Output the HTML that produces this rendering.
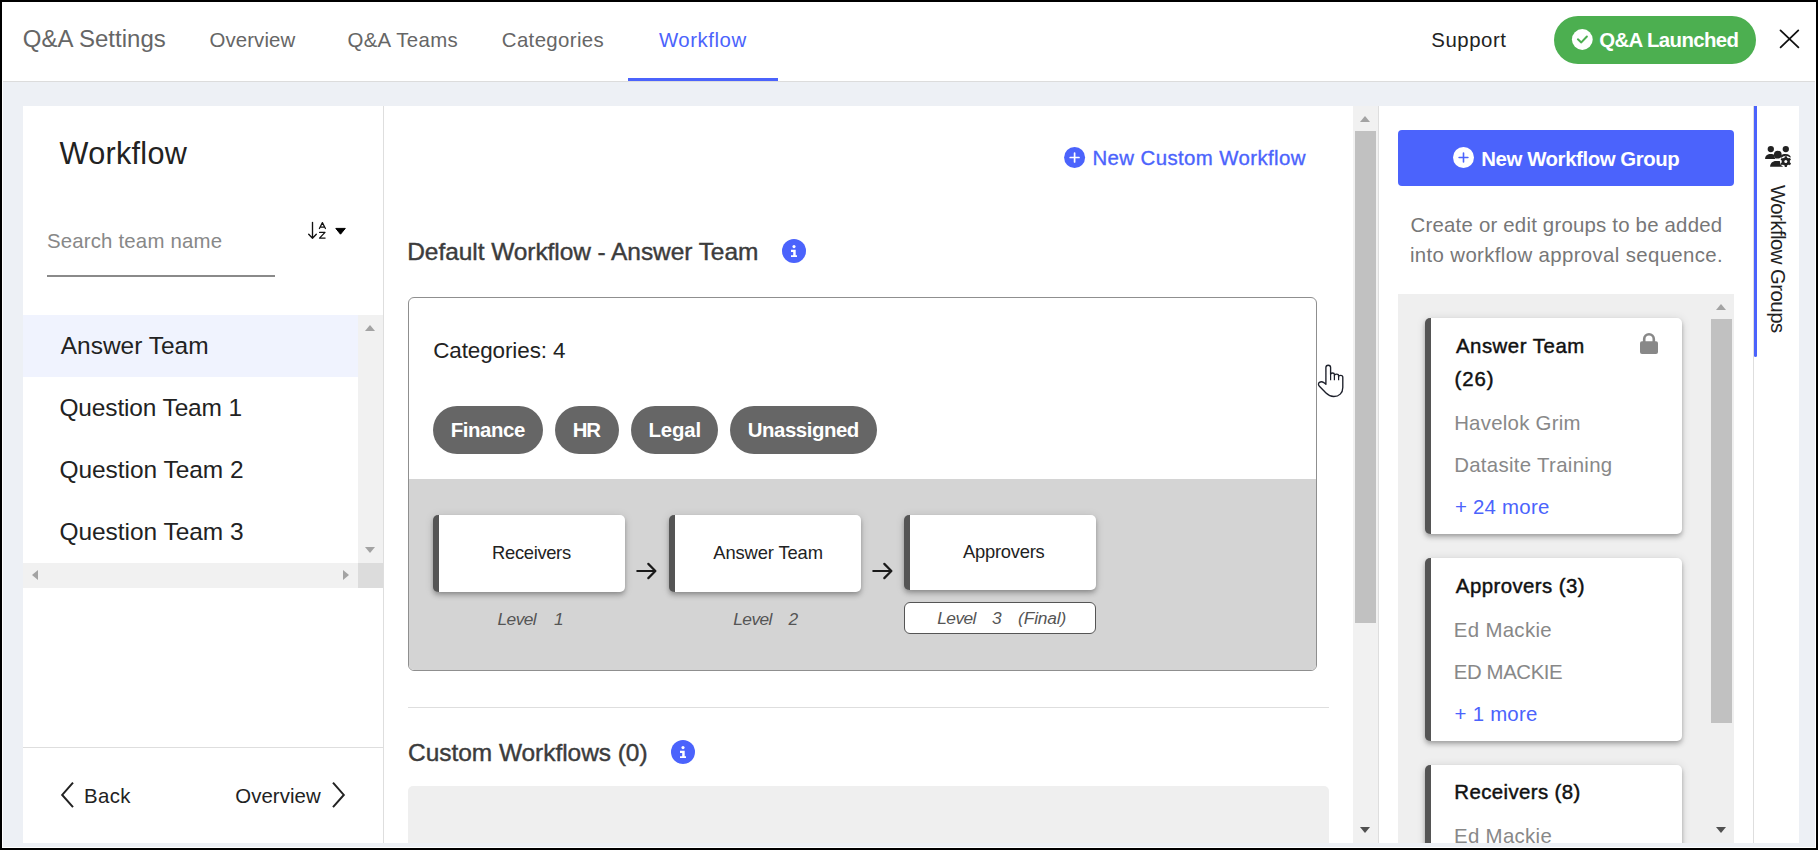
<!DOCTYPE html>
<html>
<head>
<meta charset="utf-8">
<title>Q&amp;A Settings - Workflow</title>
<style>
html,body{margin:0;padding:0;overflow:hidden;}
body{width:1818px;height:850px;background:#000;position:relative;overflow:hidden;font-family:"Liberation Sans",sans-serif;}
.a{position:absolute;box-sizing:border-box;}
.t{position:absolute;white-space:pre;font-family:"Liberation Sans",sans-serif;}
.tri{position:absolute;width:0;height:0;}
</style>
</head>
<body>
<!-- frame -->
<div class="a" style="left:2px;top:2px;width:1814px;height:846px;background:#fff;"></div>
<div class="a" style="left:3px;top:82px;width:1812px;height:765px;background:#edf0f5;"></div>
<!-- header line -->
<div class="a" style="left:3px;top:81px;width:1812px;height:1px;background:#dcdcdc;"></div>
<!-- nav underline -->
<div class="a" style="left:628px;top:78px;width:150px;height:3px;background:#4b63fc;"></div>
<!-- launched button -->
<div class="a" style="left:1554px;top:16px;width:202px;height:48px;border-radius:24px;background:#4caf50;"></div>
<svg class="a" style="left:1571px;top:29px;" width="22" height="22" viewBox="0 0 22 22">
  <circle cx="11.3" cy="10.5" r="10.4" fill="#fff"/>
  <path d="M6.9 10.3 L10.3 13.4 L15.9 7.5" fill="none" stroke="#4caf50" stroke-width="2" stroke-linecap="round" stroke-linejoin="round"/>
</svg>
<!-- close X -->
<svg class="a" style="left:1778px;top:28px;" width="24" height="22" viewBox="0 0 24 22">
  <path d="M2.5 2.4 L20.4 19.4 M20.3 2.4 L2.6 19.4" stroke="#111" stroke-width="1.8" stroke-linecap="round" fill="none"/>
</svg>

<!-- LEFT PANEL -->
<div class="a" style="left:23px;top:106px;width:361px;height:737px;background:#fff;border-right:1px solid #dedede;"></div>
<!-- search underline -->
<div class="a" style="left:47px;top:275px;width:228px;height:2px;background:#8a8a8a;"></div>
<!-- sort icon -->
<svg class="a" style="left:300px;top:215px;" width="55" height="30" viewBox="300 215 55 30">
  <path d="M312.5 222.3 V238.3 M308.7 234.2 L312.5 238.2 L316.3 234.2" fill="none" stroke="#111" stroke-width="1.35" stroke-linecap="round" stroke-linejoin="round"/>
  <path d="M319.4 228.5 L322.4 222.6 L325.4 228.5 M320.4 227.1 H324.6" fill="none" stroke="#111" stroke-width="1.25" stroke-linecap="round" stroke-linejoin="round"/>
  <path d="M319.6 232.4 H325 L319.5 238.1 H325.1" fill="none" stroke="#111" stroke-width="1.25" stroke-linecap="round" stroke-linejoin="round"/>
  <path d="M335.8 228.4 H345.3 L340.5 234.2 Z" fill="#000" stroke="#000" stroke-width="1" stroke-linejoin="round"/>
</svg>
<!-- highlighted row -->
<div class="a" style="left:23px;top:315px;width:335px;height:62px;background:#f0f3fe;"></div>
<!-- v scrollbar -->
<div class="a" style="left:358px;top:315px;width:25px;height:248px;background:#f1f1f1;"></div>
<div class="tri" style="left:364.9px;top:324.8px;border-left:5.65px solid transparent;border-right:5.65px solid transparent;border-bottom:6.2px solid #a3a3a3;"></div>
<div class="tri" style="left:364.9px;top:546.9px;border-left:5.65px solid transparent;border-right:5.65px solid transparent;border-top:6.1px solid #a3a3a3;"></div>
<!-- h scrollbar -->
<div class="a" style="left:23px;top:563px;width:335px;height:25px;background:#f1f1f1;"></div>
<div class="a" style="left:358px;top:563px;width:25px;height:25px;background:#dcdcdc;"></div>
<div class="tri" style="left:31.8px;top:569.8px;border-top:5.65px solid transparent;border-bottom:5.65px solid transparent;border-right:6.3px solid #a3a3a3;"></div>
<div class="tri" style="left:343px;top:569.8px;border-top:5.6px solid transparent;border-bottom:5.6px solid transparent;border-left:6.2px solid #a3a3a3;"></div>
<!-- divider -->
<div class="a" style="left:23px;top:747px;width:360px;height:1px;background:#dedede;"></div>
<!-- chevrons -->
<svg class="a" style="left:58px;top:780px;" width="20" height="30" viewBox="0 0 20 30">
  <path d="M15 2.6 L4.2 14.9 L15 27.2" fill="none" stroke="#222" stroke-width="2"/>
</svg>
<svg class="a" style="left:328px;top:780px;" width="20" height="30" viewBox="0 0 20 30">
  <path d="M5 2.6 L15.8 14.9 L5 27.2" fill="none" stroke="#222" stroke-width="2"/>
</svg>

<!-- MIDDLE PANEL -->
<div class="a" style="left:384px;top:106px;width:995px;height:737px;background:#fff;border-right:1px solid #dedede;"></div>
<!-- new custom workflow icon -->
<svg class="a" style="left:1064px;top:147px;" width="22" height="22" viewBox="0 0 22 22">
  <circle cx="10.6" cy="10.5" r="10.5" fill="#4b63fc"/>
  <path d="M10.6 6.1 V14.9 M6.2 10.5 H15 " stroke="#fff" stroke-width="1.7" stroke-linecap="round"/>
</svg>
<!-- info icons -->
<svg class="a" style="left:782px;top:239px;" width="24" height="24" viewBox="0 0 24 24">
  <circle cx="12" cy="12" r="12" fill="#4b63fc"/>
  <path d="M9 10.7 H13.7 V16.2 H15 V17.9 H9 V16.2 H11.2 V12.9 H9 Z" fill="#fff"/>
  <circle cx="12" cy="7.6" r="1.55" fill="#fff"/>
</svg>
<svg class="a" style="left:671px;top:740px;" width="24" height="24" viewBox="0 0 24 24">
  <circle cx="12" cy="12" r="12" fill="#4b63fc"/>
  <path d="M9 10.7 H13.7 V16.2 H15 V17.9 H9 V16.2 H11.2 V12.9 H9 Z" fill="#fff"/>
  <circle cx="12" cy="7.6" r="1.55" fill="#fff"/>
</svg>
<!-- default workflow card -->
<div class="a" style="left:408px;top:297px;width:909px;height:374px;border:1px solid #8f8f8f;border-radius:6px;background:#fff;overflow:hidden;">
  <div class="a" style="left:0;top:181px;width:907px;height:191px;background:#d4d4d4;"></div>
</div>
<!-- chips -->
<div class="a" style="left:433px;top:406px;width:110px;height:48px;border-radius:24px;background:#666;"></div>
<div class="a" style="left:555px;top:406px;width:64px;height:48px;border-radius:24px;background:#666;"></div>
<div class="a" style="left:631px;top:406px;width:87px;height:48px;border-radius:24px;background:#666;"></div>
<div class="a" style="left:730px;top:406px;width:147px;height:48px;border-radius:24px;background:#666;"></div>
<!-- boxes -->
<div class="a" style="left:433px;top:515px;width:192px;height:77px;border-radius:5px;background:#fff;border-left:6px solid #555;box-shadow:0 2px 4px -1px rgba(0,0,0,0.2),0 4px 5px 0 rgba(0,0,0,0.14),0 1px 10px 0 rgba(0,0,0,0.12);"></div>
<div class="a" style="left:669px;top:515px;width:192px;height:77px;border-radius:5px;background:#fff;border-left:6px solid #555;box-shadow:0 2px 4px -1px rgba(0,0,0,0.2),0 4px 5px 0 rgba(0,0,0,0.14),0 1px 10px 0 rgba(0,0,0,0.12);"></div>
<div class="a" style="left:904px;top:515px;width:192px;height:75px;border-radius:5px;background:#fff;border-left:6px solid #555;box-shadow:0 2px 4px -1px rgba(0,0,0,0.2),0 4px 5px 0 rgba(0,0,0,0.14),0 1px 10px 0 rgba(0,0,0,0.12);"></div>
<!-- arrows -->
<svg class="a" style="left:635px;top:560px;" width="24" height="22" viewBox="0 0 24 22">
  <path d="M2.3 11 H20.3 M13.3 3.9 L20.4 11 L13.3 18.1" fill="none" stroke="#1a1a1a" stroke-width="2.2" stroke-linecap="round" stroke-linejoin="round"/>
</svg>
<svg class="a" style="left:871px;top:560px;" width="24" height="22" viewBox="0 0 24 22">
  <path d="M2.3 11 H20.3 M13.3 3.9 L20.4 11 L13.3 18.1" fill="none" stroke="#1a1a1a" stroke-width="2.2" stroke-linecap="round" stroke-linejoin="round"/>
</svg>
<!-- level 3 box -->
<div class="a" style="left:904px;top:602px;width:192px;height:32px;border:1px solid #555;border-radius:6px;background:#fff;"></div>
<!-- separator -->
<div class="a" style="left:408px;top:707px;width:921px;height:1px;background:#dedede;"></div>
<!-- custom workflows gray box -->
<div class="a" style="left:408px;top:786px;width:921px;height:57px;border-radius:5px 5px 0 0;background:#efefef;"></div>
<!-- middle scrollbar -->
<div class="a" style="left:1353px;top:106px;width:25px;height:737px;background:#f1f1f1;"></div>
<div class="a" style="left:1355px;top:131px;width:21px;height:492px;background:#c1c1c1;"></div>
<div class="tri" style="left:1359.8px;top:115.8px;border-left:5.65px solid transparent;border-right:5.65px solid transparent;border-bottom:6.1px solid #a3a3a3;"></div>
<div class="tri" style="left:1360px;top:827px;border-left:5.75px solid transparent;border-right:5.75px solid transparent;border-top:6px solid #505050;"></div>

<!-- RIGHT PANEL -->
<div class="a" style="left:1379px;top:106px;width:420px;height:737px;background:#fff;"></div>
<div class="a" style="left:1398px;top:130px;width:336px;height:56px;border-radius:4px;background:#4b63fc;"></div>
<svg class="a" style="left:1452px;top:147px;" width="22" height="22" viewBox="0 0 22 22">
  <circle cx="11.5" cy="10.5" r="10.5" fill="#fff"/>
  <path d="M11.5 6.1 V14.9 M7.1 10.5 H15.9" stroke="#4b63fc" stroke-width="1.6" stroke-linecap="round"/>
</svg>
<!-- cards container -->
<div class="a" style="left:1398px;top:294px;width:336px;height:549px;background:#efefef;overflow:hidden;">
  <div class="a" style="left:27px;top:24px;width:257px;height:216px;border-radius:5px;background:#fff;border-left:6px solid #555;box-shadow:0 2px 4px -1px rgba(0,0,0,0.2),0 4px 5px 0 rgba(0,0,0,0.14),0 1px 10px 0 rgba(0,0,0,0.12);"></div>
  <div class="a" style="left:27px;top:264px;width:257px;height:183px;border-radius:5px;background:#fff;border-left:6px solid #555;box-shadow:0 2px 4px -1px rgba(0,0,0,0.2),0 4px 5px 0 rgba(0,0,0,0.14),0 1px 10px 0 rgba(0,0,0,0.12);"></div>
  <div class="a" style="left:27px;top:471px;width:257px;height:120px;border-radius:5px;background:#fff;border-left:6px solid #555;box-shadow:0 2px 4px -1px rgba(0,0,0,0.2),0 4px 5px 0 rgba(0,0,0,0.14),0 1px 10px 0 rgba(0,0,0,0.12);"></div>
  <div class="a" style="left:313px;top:25px;width:21px;height:404px;background:#c1c1c1;"></div>
</div>
<div class="tri" style="left:1716px;top:303.7px;border-left:5.75px solid transparent;border-right:5.75px solid transparent;border-bottom:6.4px solid #a3a3a3;"></div>
<div class="tri" style="left:1716px;top:827px;border-left:5.5px solid transparent;border-right:5.5px solid transparent;border-top:6px solid #505050;"></div>
<!-- lock -->
<svg class="a" style="left:1639px;top:332px;" width="20" height="23" viewBox="0 0 20 23">
  <path d="M5.2 10 V7 A4.8 4.8 0 0 1 14.8 7 V10" fill="none" stroke="#888" stroke-width="2.6"/>
  <rect x="1" y="9.3" width="18" height="12.7" rx="2" fill="#888"/>
</svg>
<!-- tab panel -->
<div class="a" style="left:1753px;top:106px;width:1px;height:737px;background:#dedede;"></div>
<div class="a" style="left:1754px;top:106px;width:3px;height:251px;background:#4b63fc;border-radius:0 0 1.5px 1.5px;"></div>
<svg class="a" style="left:1764px;top:145px;" width="28" height="23" viewBox="0 0 28 23">
  <circle cx="6.8" cy="4.05" r="3.15" fill="#222"/>
  <circle cx="21.8" cy="4.05" r="3.15" fill="#222"/>
  <path d="M1.1 13.9 C1.1 10.9 3.4 9 6.8 9 C8.4 9 9.5 9.3 10.3 9.9 C10.2 11.3 10.6 12.7 11.6 13.9 Z" fill="#222"/>
  <path d="M17.2 10.1 C18 9.4 19.6 9 21.8 9 C24.6 9 26.4 10.4 26.9 12.6 L17 13 Z" fill="#222"/>
  <circle cx="13.8" cy="9.7" r="3.9" fill="#222"/>
  <path d="M6.1 21.8 C6.1 18.4 8.5 16 12 16 H15.6 C17.2 16 18.4 16.5 19.3 17.2 L19.5 21.8 Z" fill="#222"/>
  <g transform="translate(21.8 16.6)">
    <circle r="5.9" fill="#fff"/>
    <circle r="4.1" fill="#222"/>
    <g fill="#222">
      <rect x="-1.15" y="-5.4" width="2.3" height="10.8" rx="0.4"/>
      <rect x="-1.15" y="-5.4" width="2.3" height="10.8" rx="0.4" transform="rotate(60)"/>
      <rect x="-1.15" y="-5.4" width="2.3" height="10.8" rx="0.4" transform="rotate(120)"/>
    </g>
    <circle r="1.5" fill="#fff"/>
  </g>
</svg>
<div class="t" id="vtab" style="left:1767px;top:184.55px;font-size:20.4px;line-height:20.4px;color:#222;transform-origin:0 0;transform:translate(21px,0) rotate(90deg);letter-spacing:-0.564px;">Workflow Groups</div>

<!-- cursor -->
<svg class="a" style="left:1316px;top:363px;" width="30" height="36" viewBox="0 0 30 36">
  <path d="M9.9 21.3 V4.6 C9.9 1.4 14.6 1.4 14.6 4.6 V11.6 C14.6 9.4 18.4 9.4 18.4 11.6 V12.8 C18.4 10.6 22.6 10.6 22.6 12.8 V14 C22.6 11.8 26.8 11.8 26.8 14.2 V24.5 C26.8 30.2 23 33.5 17.8 33.5 C14.2 33.5 12 32 10 30 L3.4 23.2 C2.2 22 2.1 20.3 3.4 19.4 C4.8 18.5 6.4 18.6 7.8 19.6 Z" fill="#fff" stroke="#1c1f2a" stroke-width="1.35" stroke-linejoin="round"/>
  <path d="M14.6 11.6 V17.3 M18.4 12.8 V17.3 M22.6 14 V17.3" stroke="#1c1f2a" stroke-width="1.2"/>
</svg>

<div class='t' id='nav_qa' style='left:22.75px;top:27.00px;font-size:23.970px;line-height:23.970px;font-weight:400;font-style:normal;letter-spacing:0.045px;color:#666;'>Q&amp;A Settings</div>
<div class='t' id='nav_ov' style='left:209.40px;top:30.00px;font-size:20.400px;line-height:20.400px;font-weight:400;font-style:normal;letter-spacing:0.129px;color:#666;'>Overview</div>
<div class='t' id='nav_tm' style='left:347.40px;top:30.00px;font-size:20.400px;line-height:20.400px;font-weight:400;font-style:normal;letter-spacing:0.381px;color:#666;'>Q&amp;A Teams</div>
<div class='t' id='nav_ct' style='left:501.80px;top:30.00px;font-size:20.400px;line-height:20.400px;font-weight:400;font-style:normal;letter-spacing:0.372px;color:#666;'>Categories</div>
<div class='t' id='nav_wf' style='left:658.95px;top:30.00px;font-size:20.400px;line-height:20.400px;font-weight:400;font-style:normal;letter-spacing:0.543px;color:#4b63fc;'>Workflow</div>
<div class='t' id='support' style='left:1431.30px;top:30.00px;font-size:20.400px;line-height:20.400px;font-weight:400;font-style:normal;letter-spacing:0.542px;color:#222;'>Support</div>
<div class='t' id='launched' style='left:1599.15px;top:30.00px;font-size:20.400px;line-height:20.400px;font-weight:700;font-style:normal;letter-spacing:-0.600px;color:#fff;'>Q&amp;A Launched</div>
<div class='t' id='title' style='left:59.55px;top:138.00px;font-size:30.600px;line-height:30.600px;font-weight:400;font-style:normal;letter-spacing:0.286px;color:#222;'>Workflow</div>
<div class='t' id='search' style='left:46.90px;top:231.00px;font-size:20.400px;line-height:20.400px;font-weight:400;font-style:normal;letter-spacing:0.187px;color:#888;'>Search team name</div>
<div class='t' id='li1' style='left:60.70px;top:334.00px;font-size:24.480px;line-height:24.480px;font-weight:400;font-style:normal;letter-spacing:0.015px;color:#222;'>Answer Team</div>
<div class='t' id='li2' style='left:59.45px;top:396.00px;font-size:24.480px;line-height:24.480px;font-weight:400;font-style:normal;letter-spacing:-0.132px;color:#222;'>Question Team 1</div>
<div class='t' id='li3' style='left:59.45px;top:458.00px;font-size:24.480px;line-height:24.480px;font-weight:400;font-style:normal;letter-spacing:-0.029px;color:#222;'>Question Team 2</div>
<div class='t' id='li4' style='left:59.45px;top:520.00px;font-size:24.480px;line-height:24.480px;font-weight:400;font-style:normal;letter-spacing:-0.029px;color:#222;'>Question Team 3</div>
<div class='t' id='back' style='left:83.95px;top:786.00px;font-size:20.400px;line-height:20.400px;font-weight:400;font-style:normal;letter-spacing:0.383px;color:#222;'>Back</div>
<div class='t' id='ovb' style='left:235.20px;top:786.00px;font-size:20.400px;line-height:20.400px;font-weight:400;font-style:normal;letter-spacing:0.079px;color:#222;'>Overview</div>
<div class='t' id='newcw' style='left:1092.50px;top:148.00px;font-size:20.400px;line-height:20.400px;font-weight:400;font-style:normal;letter-spacing:0.397px;color:#4b63fc;-webkit-text-stroke:0.35px currentColor;'>New Custom Workflow</div>
<div class='t' id='defwf' style='left:407.25px;top:240.00px;font-size:24.480px;line-height:24.480px;font-weight:400;font-style:normal;letter-spacing:-0.055px;color:#3c3c3c;-webkit-text-stroke:0.42px currentColor;'>Default Workflow - Answer Team</div>
<div class='t' id='cats' style='left:433.15px;top:340.00px;font-size:22.440px;line-height:22.440px;font-weight:400;font-style:normal;letter-spacing:-0.088px;color:#222;'>Categories: 4</div>
<div class='t' id='chip1' style='left:450.75px;top:420.00px;font-size:20.400px;line-height:20.400px;font-weight:700;font-style:normal;letter-spacing:-0.408px;color:#fff;'>Finance</div>
<div class='t' id='chip2' style='left:572.75px;top:420.00px;font-size:20.400px;line-height:20.400px;font-weight:700;font-style:normal;letter-spacing:-1.250px;color:#fff;'>HR</div>
<div class='t' id='chip3' style='left:648.45px;top:420.00px;font-size:20.400px;line-height:20.400px;font-weight:700;font-style:normal;letter-spacing:-0.113px;color:#fff;'>Legal</div>
<div class='t' id='chip4' style='left:747.75px;top:420.00px;font-size:20.400px;line-height:20.400px;font-weight:700;font-style:normal;letter-spacing:-0.444px;color:#fff;'>Unassigned</div>
<div class='t' id='box1' style='left:492.10px;top:544.00px;font-size:18.360px;line-height:18.360px;font-weight:400;font-style:normal;letter-spacing:-0.331px;color:#222;'>Receivers</div>
<div class='t' id='box2' style='left:713.30px;top:544.00px;font-size:18.360px;line-height:18.360px;font-weight:400;font-style:normal;letter-spacing:-0.125px;color:#222;'>Answer Team</div>
<div class='t' id='box3' style='left:963.00px;top:543.00px;font-size:18.360px;line-height:18.360px;font-weight:400;font-style:normal;letter-spacing:-0.250px;color:#222;'>Approvers</div>
<div class='t' id='lv1a' style='left:497.50px;top:611.00px;font-size:17.340px;line-height:17.340px;font-weight:400;font-style:italic;letter-spacing:-0.562px;color:#555;'>Level</div>
<div class='t' id='lv1b' style='left:553.90px;top:611.00px;font-size:17.340px;line-height:17.340px;font-weight:400;font-style:italic;letter-spacing:0.000px;color:#555;'>1</div>
<div class='t' id='lv2a' style='left:733.30px;top:611.00px;font-size:17.340px;line-height:17.340px;font-weight:400;font-style:italic;letter-spacing:-0.562px;color:#555;'>Level</div>
<div class='t' id='lv2b' style='left:788.40px;top:611.00px;font-size:17.340px;line-height:17.340px;font-weight:400;font-style:italic;letter-spacing:0.000px;color:#555;'>2</div>
<div class='t' id='lv3a' style='left:937.30px;top:610.00px;font-size:17.340px;line-height:17.340px;font-weight:400;font-style:italic;letter-spacing:-0.575px;color:#555;'>Level</div>
<div class='t' id='lv3b' style='left:992.10px;top:610.00px;font-size:17.340px;line-height:17.340px;font-weight:400;font-style:italic;letter-spacing:0.000px;color:#555;'>3</div>
<div class='t' id='lv3c' style='left:1018.05px;top:610.00px;font-size:17.340px;line-height:17.340px;font-weight:400;font-style:italic;letter-spacing:-0.133px;color:#555;'>(Final)</div>
<div class='t' id='custwf' style='left:408.10px;top:741.00px;font-size:24.480px;line-height:24.480px;font-weight:400;font-style:normal;letter-spacing:-0.037px;color:#3c3c3c;-webkit-text-stroke:0.42px currentColor;'>Custom Workflows (0)</div>
<div class='t' id='newwg' style='left:1481.25px;top:149.00px;font-size:20.400px;line-height:20.400px;font-weight:700;font-style:normal;letter-spacing:-0.426px;color:#fff;'>New Workflow Group</div>
<div class='t' id='desc1' style='left:1410.60px;top:215.00px;font-size:20.400px;line-height:20.400px;font-weight:400;font-style:normal;letter-spacing:0.205px;color:#777;'>Create or edit groups to be added</div>
<div class='t' id='desc2' style='left:1409.95px;top:245.00px;font-size:20.400px;line-height:20.400px;font-weight:400;font-style:normal;letter-spacing:0.363px;color:#777;'>into workflow approval sequence.</div>
<div class='t' id='c1t' style='left:1455.95px;top:336.00px;font-size:20.400px;line-height:20.400px;font-weight:400;font-style:normal;letter-spacing:0.515px;color:#111;-webkit-text-stroke:0.45px currentColor;'>Answer Team</div>
<div class='t' id='c1n' style='left:1454.50px;top:369.00px;font-size:20.400px;line-height:20.400px;font-weight:400;font-style:normal;letter-spacing:0.900px;color:#111;-webkit-text-stroke:0.45px currentColor;'>(26)</div>
<div class='t' id='c1a' style='left:1454.15px;top:413.00px;font-size:20.400px;line-height:20.400px;font-weight:400;font-style:normal;letter-spacing:0.255px;color:#888;'>Havelok Grim</div>
<div class='t' id='c1b' style='left:1454.15px;top:455.00px;font-size:20.400px;line-height:20.400px;font-weight:400;font-style:normal;letter-spacing:0.316px;color:#888;'>Datasite Training</div>
<div class='t' id='c1c' style='left:1454.90px;top:497.00px;font-size:20.400px;line-height:20.400px;font-weight:400;font-style:normal;letter-spacing:0.256px;color:#4b63fc;'>+ 24 more</div>
<div class='t' id='c2t' style='left:1455.85px;top:576.00px;font-size:20.400px;line-height:20.400px;font-weight:400;font-style:normal;letter-spacing:0.433px;color:#111;-webkit-text-stroke:0.45px currentColor;'>Approvers (3)</div>
<div class='t' id='c2a' style='left:1453.85px;top:620.00px;font-size:20.400px;line-height:20.400px;font-weight:400;font-style:normal;letter-spacing:0.319px;color:#888;'>Ed Mackie</div>
<div class='t' id='c2b' style='left:1453.85px;top:662.00px;font-size:20.400px;line-height:20.400px;font-weight:400;font-style:normal;letter-spacing:-0.419px;color:#888;'>ED MACKIE</div>
<div class='t' id='c2c' style='left:1454.60px;top:704.00px;font-size:20.400px;line-height:20.400px;font-weight:400;font-style:normal;letter-spacing:0.243px;color:#4b63fc;'>+ 1 more</div>
<div class='t' id='c3t' style='left:1454.30px;top:782.00px;font-size:20.400px;line-height:20.400px;font-weight:400;font-style:normal;letter-spacing:0.392px;color:#111;-webkit-text-stroke:0.45px currentColor;'>Receivers (8)</div>
<div class='t' id='c3a' style='left:1454.05px;top:826.00px;font-size:20.400px;line-height:20.400px;font-weight:400;font-style:normal;letter-spacing:0.319px;color:#888;'>Ed Mackie</div>
</body>
</html>
